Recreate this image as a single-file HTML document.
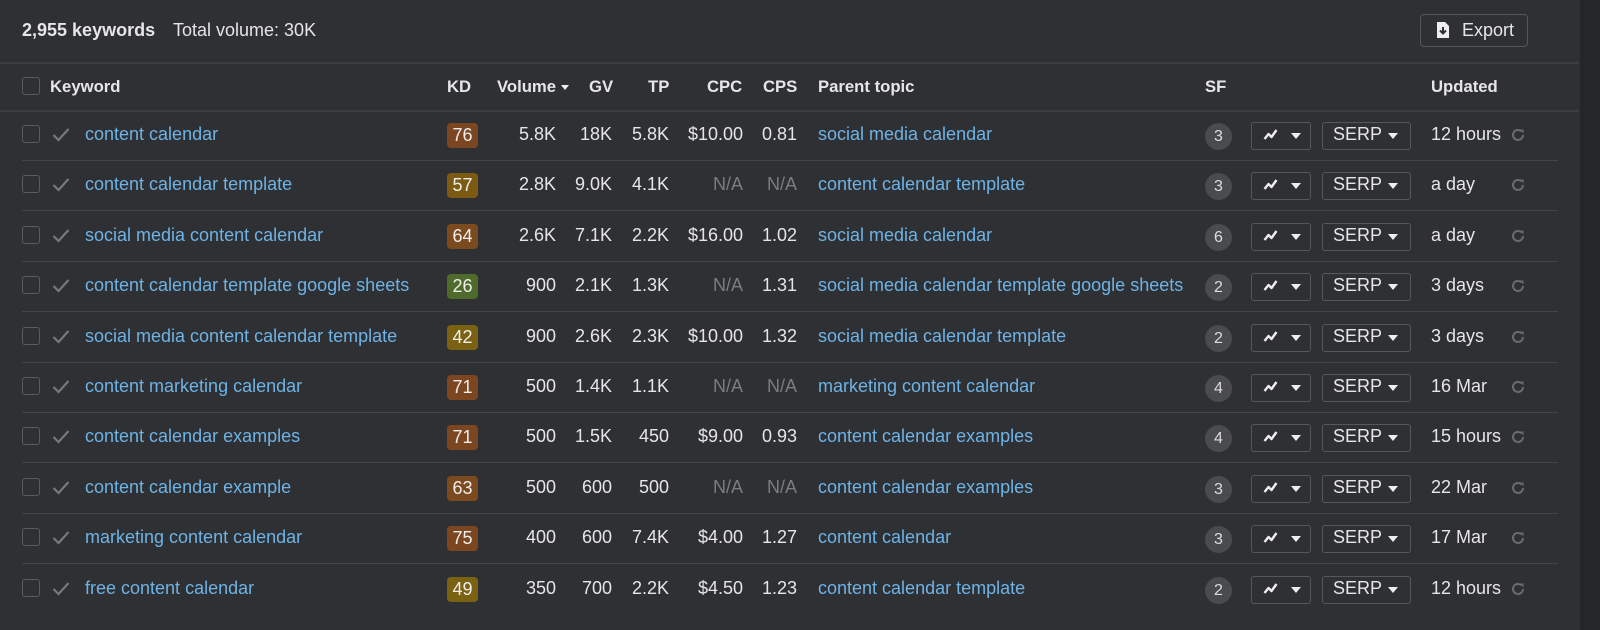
<!DOCTYPE html>
<html><head><meta charset="utf-8"><style>
body{margin:0;width:1600px;height:630px;background:#2f3033;font-family:"Liberation Sans",sans-serif;color:#e6e6e6;overflow:hidden;position:relative;font-size:18px}
.strip{position:absolute;left:1580px;top:0;width:20px;height:630px;background:#252629}
.a{position:absolute;white-space:nowrap}
.hl{position:absolute;left:0;width:1579px;height:2px;background:#3d3e42}
.rl{position:absolute;left:22px;width:1536px;height:1px;background:#434448}
.cb{position:absolute;width:16px;height:16px;border:1.5px solid #5a5b5f;border-radius:3px}
.lnk{color:#6db3e6}
.r{text-align:right}
.kd{position:absolute;left:447px;width:31px;height:25px;border-radius:4px;text-align:center;line-height:25px;color:#eee}
.na{color:#7b7c80}
.sf{position:absolute;left:1205px;width:27px;height:27px;border-radius:50%;background:#4a4b4f;text-align:center;line-height:28px;font-size:16px;color:#ddd}
.btn{position:absolute;height:25px;border:1.5px solid #56575b;border-radius:3px;box-sizing:border-box}
.tri{position:absolute;width:0;height:0;border-left:5px solid transparent;border-right:5px solid transparent;border-top:6px solid #eee}
.h{font-weight:bold;font-size:16.7px;top:77px}
</style></head><body>
<div class="strip"></div>
<div class="a" style="left:22px;top:20px;font-weight:bold;font-size:18px">2,955 keywords</div>
<div class="a" style="left:173px;top:20px;font-size:18px">Total volume: 30K</div>
<div class="btn" style="left:1420px;top:14px;width:108px;height:33px;border-radius:4px"></div>
<svg class="a" style="left:1435px;top:21px" width="16" height="18" viewBox="0 0 16 18"><path d="M2 1h8l4 4v12H2z" fill="#eee"/><path d="M8 6v6M5 9.5l3 3 3-3" stroke="#2f3033" stroke-width="2" fill="none"/></svg>
<div class="a" style="left:1462px;top:20px;font-size:18px">Export</div>
<div class="hl" style="top:62px"></div>
<div class="cb" style="left:22px;top:77px"></div>
<div class="a h" style="left:50px">Keyword</div>
<div class="a h" style="left:447px">KD</div>
<div class="a h" style="left:497px">Volume</div>
<div class="tri" style="left:561px;top:85px;border-left-width:4.5px;border-right-width:4.5px;border-top-width:5px"></div>
<div class="a h" style="left:589px">GV</div>
<div class="a h" style="left:648px">TP</div>
<div class="a h" style="left:707px">CPC</div>
<div class="a h" style="left:763px">CPS</div>
<div class="a h" style="left:818px">Parent topic</div>
<div class="a h" style="left:1205px">SF</div>
<div class="a h" style="left:1431px">Updated</div>
<div class="hl" style="top:110px;height:2px"></div>
<div id="rows"></div>
<script>
const d=[["content calendar",76,"#7c4620","5.8K","18K","5.8K","$10.00","0.81","social media calendar",3,"12 hours"],
["content calendar template",57,"#7d5a12","2.8K","9.0K","4.1K","N/A","N/A","content calendar template",3,"a day"],
["social media content calendar",64,"#7c4a1f","2.6K","7.1K","2.2K","$16.00","1.02","social media calendar",6,"a day"],
["content calendar template google sheets",26,"#4e6b2b","900","2.1K","1.3K","N/A","1.31","social media calendar template google sheets",2,"3 days"],
["social media content calendar template",42,"#7a6212","900","2.6K","2.3K","$10.00","1.32","social media calendar template",2,"3 days"],
["content marketing calendar",71,"#7c4620","500","1.4K","1.1K","N/A","N/A","marketing content calendar",4,"16 Mar"],
["content calendar examples",71,"#7c4620","500","1.5K","450","$9.00","0.93","content calendar examples",4,"15 hours"],
["content calendar example",63,"#7c4a1f","500","600","500","N/A","N/A","content calendar examples",3,"22 Mar"],
["marketing content calendar",75,"#7c4620","400","600","7.4K","$4.00","1.27","content calendar",3,"17 Mar"],
["free content calendar",49,"#7a6212","350","700","2.2K","$4.50","1.23","content calendar template",2,"12 hours"]];
let h="";
d.forEach((r,i)=>{const c=135+i*50.4,t=c-11;
const na=v=>v=="N/A"?' na':'';
h+=`<div class="cb" style="left:22px;top:${c-10}px"></div>
<svg class="a" style="left:52px;top:${c-8}px" width="18" height="15" viewBox="0 0 18 15"><path d="M1.5 8l5 5L16.5 2" stroke="#77787c" stroke-width="2.2" fill="none"/></svg>
<div class="a lnk" style="left:85px;top:${t}px">${r[0]}</div>
<div class="kd" style="top:${c-12}px;background:${r[2]}">${r[1]}</div>
<div class="a r" style="right:${1600-556}px;top:${t}px">${r[3]}</div>
<div class="a r" style="right:${1600-612}px;top:${t}px">${r[4]}</div>
<div class="a r" style="right:${1600-669}px;top:${t}px">${r[5]}</div>
<div class="a r${na(r[6])}" style="right:${1600-743}px;top:${t}px">${r[6]}</div>
<div class="a r${na(r[7])}" style="right:${1600-797}px;top:${t}px">${r[7]}</div>
<div class="a lnk" style="left:818px;top:${t}px">${r[8]}</div>
<div class="sf" style="top:${c-12}px">${r[9]}</div>
<div class="btn" style="left:1251px;top:${c-13}px;width:60px;height:28px"></div>
<svg class="a" style="left:1263px;top:${c-7}px" width="16" height="13" viewBox="0 0 16 13"><path d="M1.5 11l4-5 3 3 5-7" stroke="#eee" stroke-width="2.4" fill="none" stroke-linejoin="round"/></svg>
<div class="tri" style="left:1291px;top:${c-2}px"></div>
<div class="btn" style="left:1322px;top:${c-13}px;width:89px;height:28px"></div>
<div class="a" style="left:1333px;top:${t}px">SERP</div>
<div class="tri" style="left:1388px;top:${c-2}px"></div>
<div class="a" style="left:1431px;top:${t}px">${r[10]}</div>
<svg class="a" style="left:1510px;top:${c-8}px" width="16" height="16" viewBox="0 0 16 16"><path d="M13 8a5 5 0 1 1-1.6-3.7" stroke="#6a6b6f" stroke-width="2" fill="none"/><path d="M9.5 2.5h4v4z" fill="#6a6b6f"/></svg>`;
if(i<9)h+=`<div class="rl" style="top:${Math.round(c+25)}px"></div>`;});
document.getElementById("rows").innerHTML=h;
</script>
</body></html>
